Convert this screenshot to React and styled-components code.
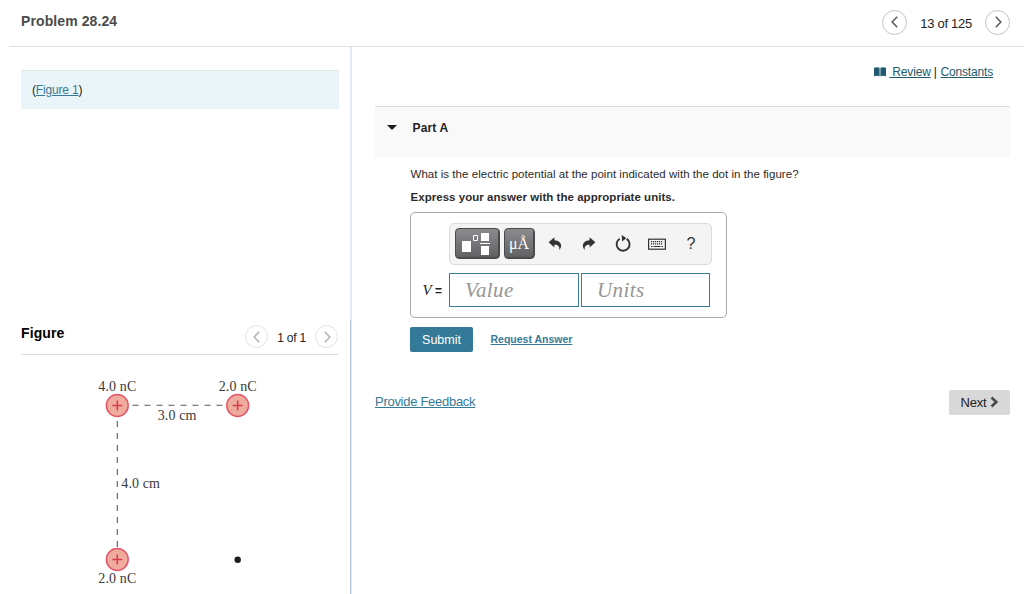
import styled, { createGlobalStyle, css } from 'styled-components';

const GlobalStyle = createGlobalStyle`
  * {
    box-sizing: border-box;
  }

  body {
    margin: 0;
    background: #ffffff;
    color: #222222;
    font-family: 'Liberation Sans', Arial, sans-serif;
    overflow: hidden;
  }
`;

const Page = styled.div`
  width: 1024px;
  height: 594px;
  display: flex;
  flex-direction: column;
`;

const Header = styled.header`
  height: 47px;
  margin-left: 9px;
  padding: 9px 14px 0 12px;
  display: flex;
  justify-content: space-between;
  align-items: flex-start;
  border-bottom: 1px solid #e1e1e1;
`;

const Title = styled.h1`
  margin: 4px 0 0;
  font-size: 14px;
  line-height: 16px;
  letter-spacing: 0.1px;
  color: #4c4c4c;
`;

const Pager = styled.div`
  margin-top: ${({ $small }) => ($small ? '8px' : '0.5px')};
  display: flex;
  align-items: center;
  gap: ${({ $small }) => ($small ? '9px' : '13px')};
  font-size: ${({ $small }) => ($small ? '12px' : '13px')};
  letter-spacing: ${({ $small }) => ($small ? '-0.2px' : '-0.27px')};
`;

const PagerLabel = styled.span`
  padding-top: 3px;
  line-height: 16px;
  white-space: nowrap;
`;

const RoundButton = styled.button`
  width: ${({ $size }) => $size}px;
  height: ${({ $size }) => $size}px;
  padding: 0;
  display: flex;
  align-items: center;
  justify-content: center;
  border: 1px solid ${({ $muted }) => ($muted ? '#e3e3e3' : '#c4c4c4')};
  border-radius: 50%;
  background: #ffffff;
  color: ${({ $muted }) => ($muted ? '#b5b5b5' : '#5e5e5e')};
`;

const Columns = styled.main`
  flex: 1;
  display: flex;
`;

const LeftColumn = styled.aside`
  width: 350px;
  padding: 23px 11px 0 21px;
  display: flex;
  flex-direction: column;
`;

const Divider = styled.div`
  width: 2px;
  border-right: 1px solid #e3e9f3;
  background: linear-gradient(#e3e9f3 273px, #b9c8e0 273px);
`;

const Link = styled.a`
  color: ${({ $dark }) => ($dark ? '#215a70' : '#367a99')};
  text-decoration: underline;
  text-underline-offset: 1px;
  text-decoration-thickness: 1px;
  white-space: pre;
`;

const Prompt = styled.div`
  height: 39px;
  padding: 12px 11px;
  border-top: 1px solid #e3eaeb;
  background: #e9f5f8;
  font-size: 12px;
  line-height: 15px;
  letter-spacing: -0.17px;
`;

const FigureHeader = styled.div`
  height: 38px;
  margin-top: 208px;
  width: 317px;
  display: flex;
  justify-content: space-between;
  align-items: flex-start;
  border-bottom: 1px solid #dcdcdc;
`;

const FigureTitle = styled.h2`
  margin: 7px 0 0;
  font-size: 14px;
  line-height: 18px;
  letter-spacing: 0.1px;
  color: #000000;
`;

const Diagram = styled.svg`
  width: 318px;
  height: 239px;
  display: block;

  text {
    font-family: 'Liberation Serif', 'Times New Roman', serif;
    font-size: 14px;
    letter-spacing: 0.12px;
    fill: #3a3a3a;
  }
`;

const RightColumn = styled.section`
  flex: 1;
  padding: 17px 14px 0 23px;
`;

const Resources = styled.div`
  height: 42px;
  padding-right: 17px;
  display: flex;
  justify-content: flex-end;
  font-size: 12px;
  line-height: 16px;
  letter-spacing: -0.18px;
`;

const Separator = styled.span`
  margin: 0 4px 0 3px;
`;

const BookIcon = styled.svg`
  width: 12px;
  height: 10px;
  margin: 3px 3px 0 0;
`;

const PartHeader = styled.div`
  height: 51px;
  padding: 13px 12px;
  display: flex;
  align-items: flex-start;
  border-top: 1px solid #dddddd;
  background: #f9f9f9;
`;

const Caret = styled.span`
  width: 0;
  height: 0;
  margin: 5px 15.5px 0 0;
  border: 5px solid transparent;
  border-top-color: #1c1c1c;
  border-bottom: 0;
`;

const PartTitle = styled.h3`
  margin: 0;
  font-size: 12px;
  line-height: 16px;
  letter-spacing: 0.15px;
`;

const PartBody = styled.div`
  padding: 9px 0 0 35px;
`;

const Question = styled.p`
  margin: 0 0 7px 0.5px;
  font-size: 11.5px;
  line-height: 16px;
  letter-spacing: 0.04px;
  font-weight: ${({ $bold }) => ($bold ? 700 : 400)};
  color: #2b2b2b;
`;

const AnswerBox = styled.div`
  width: 317px;
  height: 106px;
  padding: 10px 14px 0 10px;
  display: flex;
  flex-direction: column;
  align-items: flex-end;
  border: 1px solid #a9a9a9;
  border-radius: 5px;
`;

const Toolbar = styled.div`
  width: 263px;
  height: 42px;
  padding: 0 5px;
  display: flex;
  align-items: center;
  border: 1px solid #dcdcdc;
  border-radius: 5px;
  background: #f4f4f4;
`;

const toolSize = css`
  flex: none;
  width: ${({ $width }) => $width}px;
  height: 31px;
  padding: 0;
`;

const DarkTool = styled.button`
  ${toolSize}
  margin: 0 3.5px 1px 0;
  display: flex;
  align-items: center;
  justify-content: center;
  border: 1px solid #4b4b4d;
  border-radius: 4px;
  background: linear-gradient(#8b8b90, #606062);
  box-shadow: inset -1px -1px 0 #4a4a4c;
  color: #ffffff;
  font: 16px/28px 'Liberation Serif', serif;
`;

const Tool = styled.button`
  ${toolSize}
  width: 34px;
  display: flex;
  align-items: center;
  justify-content: center;
  border: 0;
  background: none;
  color: #333333;
  font: 16px 'Liberation Sans', Arial, sans-serif;
`;

const AnswerRow = styled.div`
  margin: 8px 2px 0 0;
  display: flex;
  align-items: center;
  gap: 2px;
`;

const Variable = styled.label`
  margin-right: 5px;
  font: bold 12px 'Liberation Sans', Arial, sans-serif;
  white-space: nowrap;

  i {
    font: italic 15px 'Liberation Serif', 'Times New Roman', serif;
  }
`;

const Field = styled.input`
  width: ${({ $width }) => $width}px;
  height: 34px;
  padding: 0 15px;
  border: 1px solid #3b7c99;
  border-radius: 0;
  outline: 0;
  font: italic 21px 'Liberation Serif', 'Times New Roman', serif;
  letter-spacing: 0.4px;

  &::placeholder {
    color: #959595;
    opacity: 1;
  }
`;

const Actions = styled.div`
  margin-top: 9px;
  display: flex;
  align-items: flex-start;
`;

const SubmitButton = styled.button`
  width: 63px;
  height: 25px;
  margin-right: 17.5px;
  padding: 1px 0 0;
  border: 0;
  border-radius: 2px;
  background: #357999;
  color: #ffffff;
  font: 12.5px 'Liberation Sans', Arial, sans-serif;
`;

const RequestLink = styled(Link)`
  margin-top: 5px;
  font-size: 10.5px;
  line-height: 14px;
  font-weight: 700;
`;

const BottomBar = styled.div`
  margin-top: 38px;
  display: flex;
  justify-content: space-between;
  align-items: flex-start;
`;

const FeedbackLink = styled(Link)`
  margin-top: 4px;
  font-size: 13px;
  line-height: 15px;
  letter-spacing: -0.28px;
`;

const NextButton = styled.button`
  width: 61px;
  height: 25px;
  padding: 0;
  display: flex;
  align-items: center;
  justify-content: center;
  gap: 3px;
  border: 0;
  border-radius: 2px;
  background: #d8d8d8;
  color: #222222;
  font: 13px 'Liberation Sans', Arial, sans-serif;
  letter-spacing: -0.15px;
`;

const NextIcon = styled.svg`
  width: 9px;
  height: 12px;
  margin-bottom: 1px;
`;

const Chevron = ({ right }) => (
  <svg width="14" height="14" viewBox="0 0 14 14" fill="none" stroke="currentColor" strokeWidth="1.6">
    <path d={right ? 'M4.800 1.800L9.800 7l-5 5.200' : 'M9.200 1.800L4.200 7l5 5.200'} />
  </svg>
);

const Charge = ({ x, y }) => (
  <g transform={`translate(${x} ${y})`} stroke="#d93a52">
    <circle r="10.9" fill="#efac9d" stroke="#e2566a" strokeWidth="1.5" />
    <path d="M-5 0H5M0-5V5" strokeWidth="1.5" />
  </g>
);

const ChargeDiagram = () => (
  <Diagram viewBox="21 355 318 239">
    <g stroke="#5a5a5a" strokeWidth="1.1" strokeDasharray="6 6">
      <path d="M132.5 405.3H223" />
      <path d="M117.3 421V547" />
    </g>
    <Charge x={117.3} y={405.5} />
    <Charge x={237.7} y={405.5} />
    <Charge x={117.3} y={559.5} />
    <circle cx="237.7" cy="559.7" r="3.2" fill="#1c1c1c" />
    <text x="98.3" y="391">4.0 nC</text>
    <text x="218.7" y="391">2.0 nC</text>
    <text x="157.7" y="420">3.0 cm</text>
    <text x="121.3" y="488">4.0 cm</text>
    <text x="98.3" y="583">2.0 nC</text>
  </Diagram>
);

const TemplateIcon = () => (
  <svg width="32" height="24" viewBox="0 0 32 24" fill="#ffffff">
    <path d="M0 9h9v11H0zM19 1h8v8h-8zM19 14h8v9h-8z" />
    <path d="M11.500 3.500h4v5h-4z" fill="none" stroke="#ffffff" />
    <path d="M18 11h10v1H18z" />
  </svg>
);

const UndoIcon = ({ flip }) => (
  <svg width="14" height="14" viewBox="0 0 14 14" fill="currentColor">
    <path
      transform={flip ? 'matrix(-1 0 0 1 14 0)' : undefined}
      d="M.6 5.200L6.400.2v3c4.200.2 6.700 2.300 6.700 5.600 0 1.700-.7 3.200-1.900 4.200.6-3.400-.9-5.200-4.800-5.200v2.700z"
    />
  </svg>
);

const ResetIcon = () => (
  <svg width="18" height="18" viewBox="0 0 18 18">
    <path d="M5.700 3.700A6.500 6.500 0 1 0 12.800 3.900" fill="none" stroke="currentColor" strokeWidth="1.900" />
    <path d="M7.800.1l4.600 3.200-4.400 3.300z" fill="currentColor" />
  </svg>
);

const KeyboardIcon = () => (
  <svg width="18" height="12" viewBox="0 0 18 12" fill="none" stroke="currentColor">
    <rect x=".6" y="1.200" width="16.800" height="10" strokeWidth="1.200" />
    <path d="M3 3.700h12M3 5.900h12" strokeDasharray="1.200 .8" strokeWidth="1.200" />
    <path d="M3 8.500h1.500m1 0h7m1 0H15" strokeWidth="1.200" />
  </svg>
);

const App = () => {
  return (
    <Page>
      <GlobalStyle />
      <Header>
        <Title>Problem 28.24</Title>
        <Pager>
          <RoundButton $size={25}>
            <Chevron />
          </RoundButton>
          <PagerLabel>13 of 125</PagerLabel>
          <RoundButton $size={25}>
            <Chevron right />
          </RoundButton>
        </Pager>
      </Header>
      <Columns>
        <LeftColumn>
          <Prompt>
            (<Link>Figure 1</Link>)
          </Prompt>
          <FigureHeader>
            <FigureTitle>Figure</FigureTitle>
            <Pager $small>
              <RoundButton $size={23} $muted>
                <Chevron />
              </RoundButton>
              <PagerLabel>1 of 1</PagerLabel>
              <RoundButton $size={23} $muted>
                <Chevron right />
              </RoundButton>
            </Pager>
          </FigureHeader>
          <ChargeDiagram />
        </LeftColumn>
        <Divider />
        <RightColumn>
          <Resources>
            <BookIcon viewBox="0 0 12 10" fill="#215a70">
              <path d="M0 .7Q3-.2 5.600.8V9.300Q3 8.300 0 9.200zM6.400.8Q9-.2 12 .7V9.200Q9 8.300 6.400 9.300z" />
            </BookIcon>
            <Link $dark> Review</Link>
            <Separator>|</Separator>
            <Link $dark>Constants</Link>
          </Resources>
          <PartHeader>
            <Caret />
            <PartTitle>Part A</PartTitle>
          </PartHeader>
          <PartBody>
            <Question>What is the electric potential at the point indicated with the dot in the figure?</Question>
            <Question $bold>Express your answer with the appropriate units.</Question>
            <AnswerBox>
              <Toolbar>
                <DarkTool $width={45}>
                  <TemplateIcon />
                </DarkTool>
                <DarkTool $width={31}>μÅ</DarkTool>
                <Tool>
                  <UndoIcon />
                </Tool>
                <Tool>
                  <UndoIcon flip />
                </Tool>
                <Tool>
                  <ResetIcon />
                </Tool>
                <Tool>
                  <KeyboardIcon />
                </Tool>
                <Tool>?</Tool>
              </Toolbar>
              <AnswerRow>
                <Variable>
                  <i>V</i> =
                </Variable>
                <Field $width={130} placeholder="Value" />
                <Field $width={129} placeholder="Units" />
              </AnswerRow>
            </AnswerBox>
            <Actions>
              <SubmitButton>Submit</SubmitButton>
              <RequestLink>Request Answer</RequestLink>
            </Actions>
          </PartBody>
          <BottomBar>
            <FeedbackLink>Provide Feedback</FeedbackLink>
            <NextButton>
              Next
              <NextIcon viewBox="0 0 9 12" fill="none" stroke="#4a4a4a" strokeWidth="2.600">
                <path d="M1.500 1.500L6.300 6l-4.800 4.500" />
              </NextIcon>
            </NextButton>
          </BottomBar>
        </RightColumn>
      </Columns>
    </Page>
  );
};

export default App;
